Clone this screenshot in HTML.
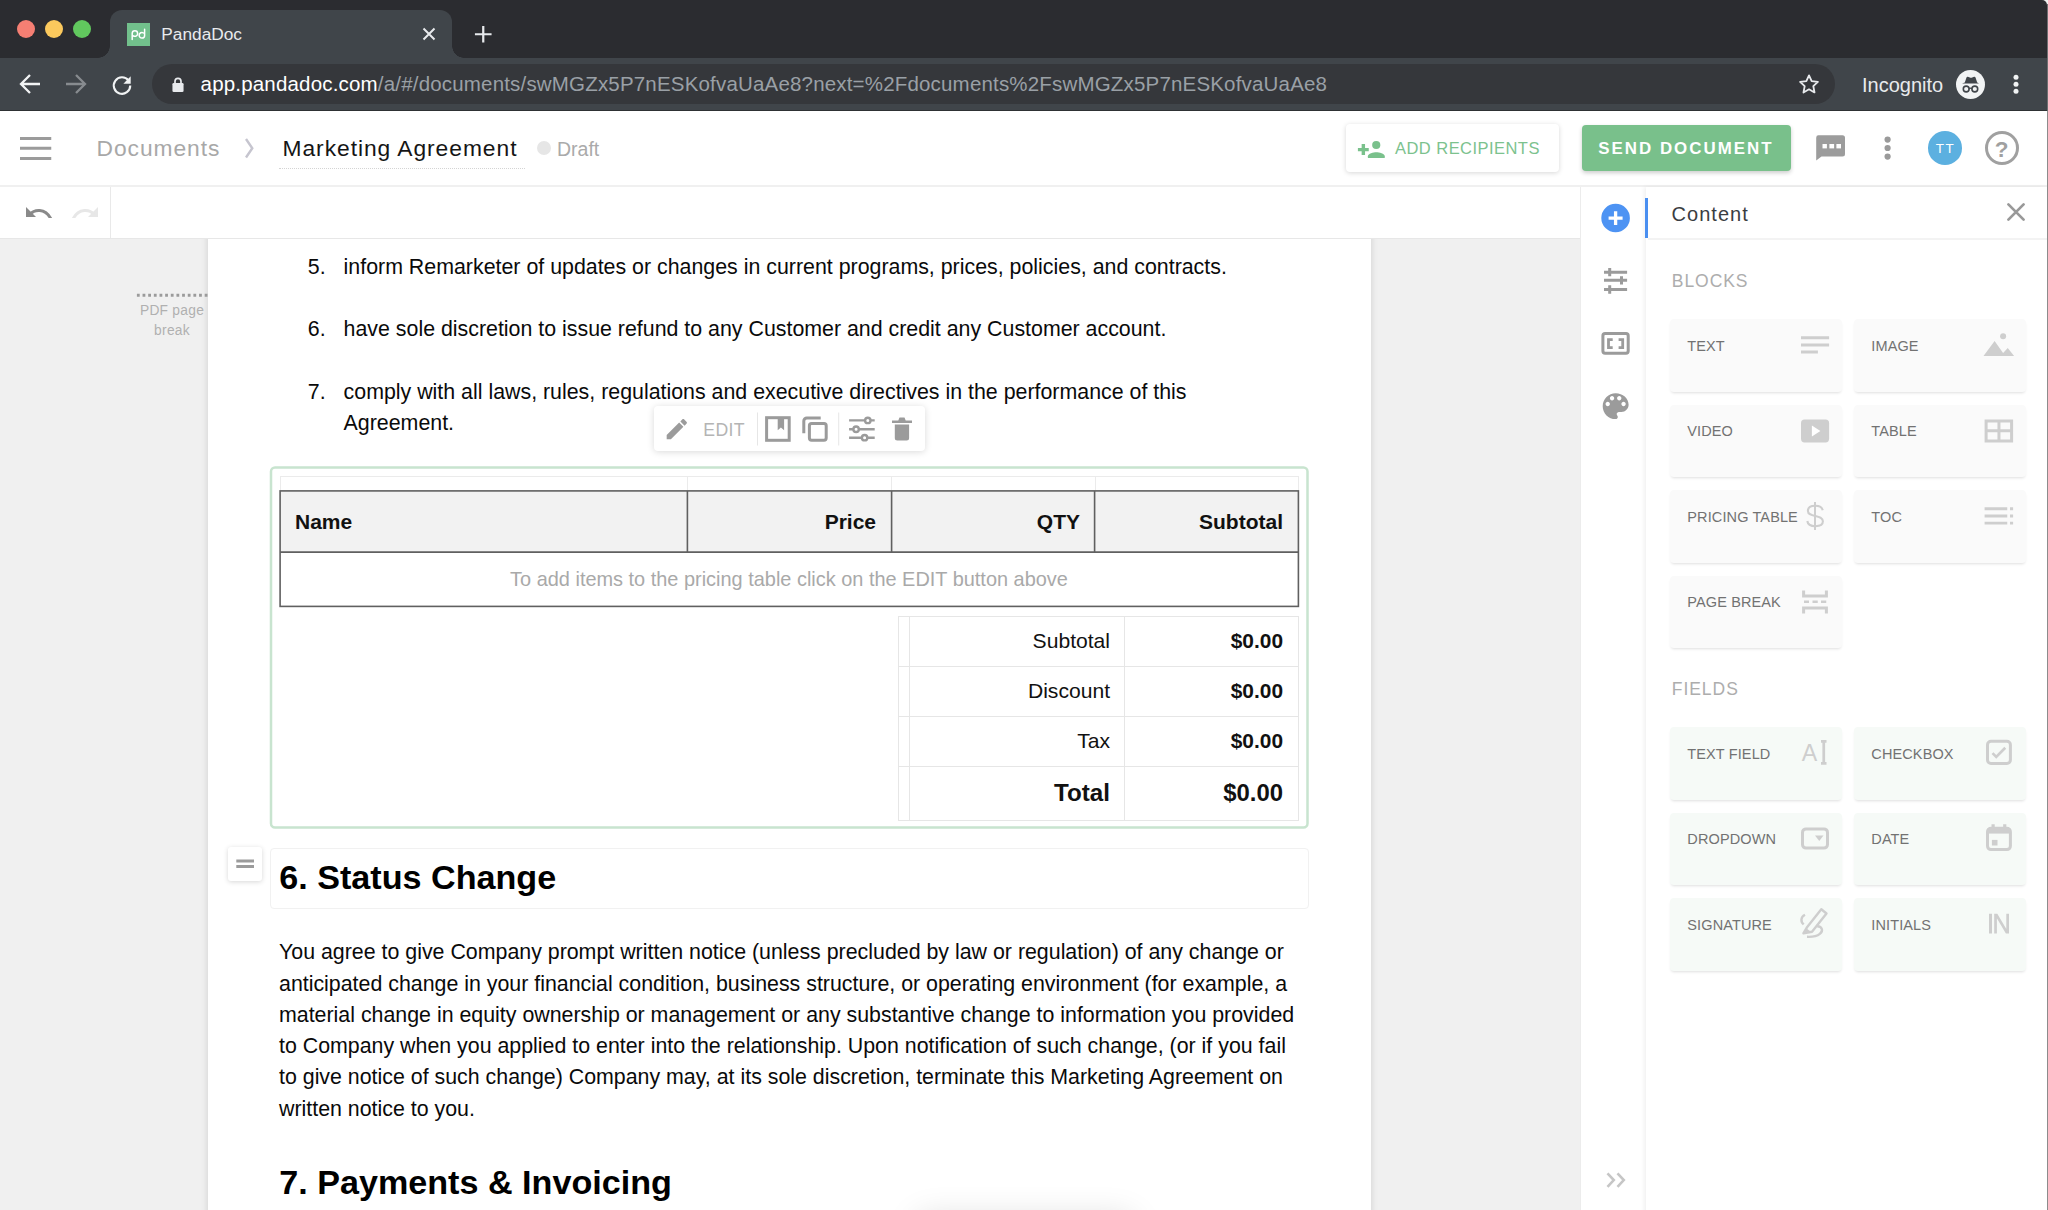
<!DOCTYPE html>
<html>
<head>
<meta charset="utf-8">
<title>PandaDoc</title>
<style>
*{box-sizing:border-box;margin:0;padding:0}
html,body{width:2048px;height:1210px;overflow:hidden;background:#fff;font-family:"Liberation Sans",sans-serif;}
.abs{position:absolute}
#root{position:relative;width:2048px;height:1210px;overflow:hidden;background:#f0f0f0}
/* ---------- browser chrome ---------- */
#tabstrip{left:0;top:0;width:2047px;height:58px;background:#2b2c30;border-top-right-radius:5px}
#tab{left:110px;top:10px;width:342px;height:48px;background:#40454a;border-radius:12px 12px 0 0}
#tab:before,#tab:after{content:"";position:absolute;bottom:0;width:12px;height:12px;background:radial-gradient(circle at 0 0,rgba(0,0,0,0) 11.5px,#40454a 12px)}
#tab:before{left:-12px}
#tab:after{right:-12px;background:radial-gradient(circle at 100% 0,rgba(0,0,0,0) 11.5px,#40454a 12px)}
.tl{width:18px;height:18px;border-radius:50%;top:20px}
#toolbar{left:0;top:58px;width:2047px;height:53px;background:#40454a;border-bottom:1px solid #2e3134}
#omni{left:152px;top:64px;width:1683px;height:40px;border-radius:20px;background:#35373b}
#url{left:200px;top:64px;height:40px;line-height:40px;font-size:20.5px;color:#9aa0a6;white-space:nowrap;letter-spacing:.18px}
#url b{font-weight:normal;color:#fff}
/* ---------- app header ---------- */
#apphead{left:0;top:111px;width:2047px;height:76px;background:#fff;border-bottom:2px solid #f0f0f0}
#bar2{left:0;top:187px;width:1580px;height:52px;background:#fff;border-bottom:1px solid #e7e7e7}
/* ---------- document ---------- */
#page{left:208px;top:225px;width:1163px;height:995px;background:#fff;box-shadow:0 0 7px rgba(0,0,0,.14)}
.doc{font-size:21.375px;color:#0a0a0a;white-space:nowrap;line-height:31.500px}
.th{font-size:21px;font-weight:700;line-height:30px;color:#111;white-space:nowrap}
.tl2{font-size:21.100px;line-height:30px;color:#111;white-space:nowrap}
.tl2.b{font-weight:700;font-size:20.900px}
.h{font-size:34.130px;font-weight:700;line-height:40px;color:#000;white-space:nowrap}
/* ---------- right panel ---------- */
#strip{left:1580px;top:187px;width:67px;height:1030px;background:#fff;border-left:1px solid #ececec}
#panel{left:1646px;top:187px;width:401px;height:1030px;background:#fff;box-shadow:-2px 0 4px rgba(0,0,0,.06)}
.card{width:171.700px;height:72.500px;background:#fafafa;border-radius:4px;box-shadow:0 2px 3px -1px rgba(0,0,0,.13)}
.card.f{background:#f6faf7}
.card span{position:absolute;left:17.300px;top:17.600px;font-size:14.5px;letter-spacing:.12px;color:#727272;line-height:18px;white-space:nowrap}
.card svg{position:absolute;left:0;top:0}
.sec{font-size:17.500px;letter-spacing:.950px;line-height:22px;color:#adadad;white-space:nowrap}
</style>
</head>
<body>
<div id="root">

<!-- browser chrome -->
<div id="tabstrip" class="abs"></div>
<div id="tab" class="abs"></div>
<div class="abs tl" style="left:17px;background:#f57f73"></div>
<div class="abs tl" style="left:45px;background:#fbc95d"></div>
<div class="abs tl" style="left:73px;background:#61c85e"></div>
<div id="toolbar" class="abs"></div>
<div id="omni" class="abs"></div>
<div id="url" class="abs" style="left:200.600px"><b>app.pandadoc.com</b>/a/#/documents/swMGZx5P7nESKofvaUaAe8?next=%2Fdocuments%2FswMGZx5P7nESKofvaUaAe8</div>


<!-- tab content -->
<div class="abs" style="left:127px;top:23px;width:23px;height:23px;background:#72c08c"></div>
<svg class="abs" style="left:127px;top:23px" width="23" height="23" viewBox="0 0 23 23"><path d="M5.2 16.6V10.4a2.7 2.7 0 0 1 5.4 0v.3a2.7 2.7 0 0 1-4.3 2.1M17.6 6.2v6.2a2.7 2.7 0 0 1-5.4 0v-.3a2.7 2.7 0 0 1 4.3-2.1" fill="none" stroke="#fff" stroke-width="1.5" stroke-linecap="round"/></svg>
<div class="abs" style="left:161.300px;top:22.300px;font-size:17.300px;line-height:24px;color:#e8eaed;white-space:nowrap">PandaDoc</div>
<svg class="abs" style="left:422px;top:27px" width="14" height="14" viewBox="0 0 14 14"><path d="M1.5 1.5l11 11M12.5 1.5l-11 11" stroke="#e8eaed" stroke-width="2" fill="none"/></svg>
<svg class="abs" style="left:474px;top:25px" width="18.500" height="18.500" viewBox="0 0 20 20"><path d="M10 1v18M1 10h18" stroke="#e8eaed" stroke-width="2.4" fill="none"/></svg>
<!-- nav icons -->
<svg class="abs" style="left:19px;top:73px" width="22" height="22" viewBox="0 0 22 22"><path d="M21 11H2.5M11 2l-9 9 9 9" stroke="#f1f3f4" stroke-width="2.3" fill="none"/></svg>
<svg class="abs" style="left:65px;top:73px" width="22" height="22" viewBox="0 0 22 22"><path d="M1 11h18.5M11 2l9 9-9 9" stroke="#878b8f" stroke-width="2.3" fill="none"/></svg>
<svg class="abs" style="left:110.500px;top:73.500px" width="22" height="22" viewBox="0 0 24 24"><path d="M19.2 7.2A9 9 0 1 0 21 12.6" stroke="#f1f3f4" stroke-width="2.3" fill="none"/><path d="M21.5 2.5v8h-8z" fill="#f1f3f4"/></svg>
<!-- lock -->
<svg class="abs" style="left:172px;top:77px" width="12" height="15.400" viewBox="0 0 14 18"><rect x="0.5" y="7" width="13" height="10.5" rx="1.5" fill="#e8eaed"/><path d="M3.5 7.5V5a3.5 3.5 0 0 1 7 0v2.5" stroke="#e8eaed" stroke-width="2" fill="none"/></svg>
<!-- star -->
<svg class="abs" style="left:1798px;top:73px" width="22" height="22" viewBox="0 0 24 24"><path d="M12 2.6l2.9 6.3 6.8.8-5 4.7 1.3 6.8-6-3.4-6 3.4 1.3-6.8-5-4.7 6.8-.8z" fill="none" stroke="#e8eaed" stroke-width="2" stroke-linejoin="round"/></svg>
<div class="abs" style="left:1862px;top:73px;font-size:20px;line-height:24px;color:#e8eaed;white-space:nowrap">Incognito</div>
<div class="abs" style="left:1956px;top:70px;width:29px;height:29px;border-radius:50%;background:#f1f3f4"></div>
<svg class="abs" style="left:1956px;top:70px" width="29" height="29" viewBox="0 0 29 29"><path d="M6 13.5h17l-1.8-.9-1.7-5.1c-.2-.6-.8-.9-1.4-.7l-1.9.7c-.8.3-1.6.3-2.4 0l-1.9-.7c-.6-.2-1.2.1-1.4.7l-1.7 5.1z" fill="#40454a"/><circle cx="10.2" cy="19" r="2.9" fill="none" stroke="#40454a" stroke-width="1.6"/><circle cx="18.8" cy="19" r="2.9" fill="none" stroke="#40454a" stroke-width="1.6"/><path d="M13 18.6q1.5-.9 3 0" fill="none" stroke="#40454a" stroke-width="1.4"/></svg>
<svg class="abs" style="left:2010px;top:70px" width="12" height="28" viewBox="0 0 12 28"><circle cx="6" cy="7.200" r="2.500" fill="#f1f3f4"/><circle cx="6" cy="14.200" r="2.500" fill="#f1f3f4"/><circle cx="6" cy="21.200" r="2.500" fill="#f1f3f4"/></svg>

<!-- app header -->
<div id="apphead" class="abs"></div>
<div id="page" class="abs"></div>
<div id="bar2" class="abs"></div>


<svg class="abs" style="left:20px;top:135px" width="32" height="27" viewBox="0 0 32 27"><path d="M0 3.450h31.250M0 13.200h31.250M0 23.450h31.250" stroke="#9b9b9b" stroke-width="3" fill="none"/></svg>
<div class="abs" style="left:96.500px;top:134.400px;font-size:22.800px;letter-spacing:.95px;line-height:28px;color:#a8a8a8;white-space:nowrap">Documents</div>
<svg class="abs" style="left:243px;top:136px" width="14" height="26" viewBox="0 0 14 26"><path d="M3 3l6.300 9.200L3 21.500" stroke="#c6c5cf" stroke-width="2.400" fill="none"/></svg>
<div class="abs" style="left:282.500px;top:134.400px;font-size:22.800px;letter-spacing:.96px;line-height:28px;color:#151515;white-space:nowrap">Marketing Agreement</div>
<div class="abs" style="left:279px;top:168px;width:246px;height:0;border-top:1.5px dotted #d4d4d4"></div>
<div class="abs" style="left:537px;top:141px;width:14px;height:14px;border-radius:50%;background:#e6e6e6"></div>
<div class="abs" style="left:557px;top:136px;font-size:19.5px;line-height:26px;color:#aaa;white-space:nowrap">Draft</div>
<!-- add recipients -->
<div class="abs" style="left:1346px;top:124px;width:213px;height:48px;background:#fff;border-radius:4px;box-shadow:0 1px 5px rgba(0,0,0,.16)"></div>
<svg class="abs" style="left:1357px;top:138px" width="28" height="22" viewBox="0 0 28 22"><circle cx="19.250" cy="7" r="4.100" fill="#7ac18c"/><path d="M10.900 19.900v-1.600c0-2.700 5.600-4.050 8.400-4.050s8.450 1.350 8.450 4.050v1.600z" fill="#7ac18c"/><path d="M6.350 6.100v10.900M.9 11.600h10.850" stroke="#7ac18c" stroke-width="3.400" fill="none"/></svg>
<div class="abs" style="left:1395px;top:137.200px;font-size:16.500px;letter-spacing:.46px;line-height:22px;color:#7cc28e;white-space:nowrap">ADD RECIPIENTS</div>
<!-- send -->
<div class="abs" style="left:1581.500px;top:125.400px;width:209.400px;height:45.200px;background:#79c08b;border-radius:4px;box-shadow:0 2px 4px rgba(0,0,0,.2)"></div>
<div class="abs" style="left:1598.300px;top:138.400px;font-size:16.900px;font-weight:700;letter-spacing:2px;line-height:22px;color:#fff;white-space:nowrap">SEND DOCUMENT</div>
<!-- chat -->
<svg class="abs" style="left:1815px;top:135px" width="31" height="26" viewBox="0 0 31 26"><path d="M4 .2h23.500a2.500 2.500 0 0 1 2.500 2.500v16.400a2.500 2.500 0 0 1-2.500 2.500H6.500L1.200 25.400V2.700A2.500 2.500 0 0 1 4 .2z" fill="#9c9c9c"/><rect x="7.500" y="9" width="4.400" height="4.400" fill="#fff"/><rect x="14.400" y="9" width="4.700" height="4.400" fill="#fff"/><rect x="21.400" y="9" width="4.600" height="4.400" fill="#fff"/></svg>
<svg class="abs" style="left:1881px;top:133px" width="14" height="30" viewBox="0 0 14 30"><circle cx="6.600" cy="6.600" r="3.100" fill="#9a9a9a"/><circle cx="6.600" cy="15" r="3.100" fill="#9a9a9a"/><circle cx="6.600" cy="23.600" r="3.100" fill="#9a9a9a"/></svg>
<div class="abs" style="left:1927.500px;top:131px;width:34.500px;height:34px;border-radius:50%;background:#5cb0e0;color:#fff;font-size:13.500px;letter-spacing:1.700px;line-height:36.500px;text-align:center;padding-left:1.700px">TT</div>
<div class="abs" style="left:1984.500px;top:131px;width:34px;height:34px;border-radius:50%;border:3px solid #a0a0a0;color:#a0a0a0;font-size:22.500px;font-weight:700;line-height:31px;text-align:center">?</div>
<!-- undo/redo -->
<svg class="abs" style="left:25px;top:206px" width="28" height="12.200" viewBox="0 0 28 12.200"><path d="M1 1v10h10z" fill="#8a8a8a"/><path d="M5 8.500C9 3.500 20 1.500 26 13" stroke="#8a8a8a" stroke-width="3" fill="none"/></svg>
<svg class="abs" style="left:71px;top:206px" width="28" height="12.200" viewBox="0 0 28 12.200"><path d="M27 1v10H17z" fill="#e7e7e7"/><path d="M23 8.500C19 3.500 8 1.500 2 13" stroke="#e7e7e7" stroke-width="3" fill="none"/></svg>
<div class="abs" style="left:110px;top:187px;width:1px;height:51px;background:#e9e9e9"></div>

<!-- document -->


<!-- pdf page break marker -->
<svg class="abs" style="left:130px;top:290px" width="78" height="10" viewBox="0 0 78 10"><path d="M6.900 5.300H78" stroke="#9b9b9b" stroke-width="3" stroke-dasharray="2.800 2.850" fill="none"/></svg>
<div class="abs" style="left:122px;top:301px;width:100px;text-align:center;font-size:13.800px;letter-spacing:.25px;line-height:19.800px;color:#b0b0b0">PDF page<br>break</div>

<!-- list -->
<div class="abs doc" style="left:307.800px;top:251.500px">5.</div>
<div class="abs doc" style="left:343.600px;top:251.500px">inform Remarketer of updates or changes in current programs, prices, policies, and contracts.</div>
<div class="abs doc" style="left:307.800px;top:314px">6.</div>
<div class="abs doc" style="left:343.600px;top:314px">have sole discretion to issue refund to any Customer and credit any Customer account.</div>
<div class="abs doc" style="left:307.800px;top:376.750px">7.</div>
<div class="abs doc" style="left:343.600px;top:376.750px">comply with all laws, rules, regulations and executive directives in the performance of this<br>Agreement.</div>

<!-- pricing block -->
<svg class="abs" style="left:265px;top:462px" width="1050" height="372" viewBox="0 0 1050 372"><rect x="6" y="5.500" width="1036.500" height="360" rx="4" fill="#fff" stroke="#c8e4cf" stroke-width="2.500"/></svg>
<div class="abs" style="left:280px;top:476px;width:1019px;height:14px;border:1px solid #ebebeb;border-bottom:0"></div>
<div class="abs" style="left:687px;top:476px;width:1px;height:14px;background:#ebebeb"></div>
<div class="abs" style="left:891px;top:476px;width:1px;height:14px;background:#ebebeb"></div>
<div class="abs" style="left:1095px;top:476px;width:1px;height:14px;background:#ebebeb"></div>
<svg class="abs" style="left:270px;top:480px" width="1040" height="136" viewBox="0 0 1040 136">
<rect x="10.100" y="10.900" width="1018.300" height="61.200" fill="#f2f2f2"/>
<g stroke="#606060" stroke-width="1.600" fill="none"><rect x="10.100" y="10.900" width="1018.300" height="115.500"/><path d="M10.100 72.100h1018.300M417.400 10.900v61.200M621.600 10.900v61.200M824.600 10.900v61.200"/></g>
</svg>
<div class="abs th" style="left:295px;top:506.750px">Name</div>
<div class="abs th" style="right:1172px;top:506.750px">Price</div>
<div class="abs th" style="right:968px;top:506.750px">QTY</div>
<div class="abs th" style="right:765px;top:506.750px">Subtotal</div>
<div class="abs" style="left:279.500px;top:564px;width:1019px;text-align:center;font-size:19.930px;line-height:30px;color:#a9a9a9;white-space:nowrap">To add items to the pricing table click on the EDIT button above</div>
<!-- totals -->
<div class="abs" style="left:898px;top:616px;width:401px;height:205px;border:1px solid #e6e6e6"></div>
<div class="abs" style="left:909px;top:616px;width:1px;height:205px;background:#e6e6e6"></div>
<div class="abs" style="left:1124px;top:616px;width:1px;height:205px;background:#e6e6e6"></div>
<div class="abs" style="left:898px;top:666px;width:401px;height:1px;background:#e6e6e6"></div>
<div class="abs" style="left:898px;top:716px;width:401px;height:1px;background:#e6e6e6"></div>
<div class="abs" style="left:898px;top:766px;width:401px;height:1px;background:#e6e6e6"></div>
<div class="abs tl2" style="right:938px;top:626px">Subtotal</div>
<div class="abs tl2" style="right:938px;top:676px">Discount</div>
<div class="abs tl2" style="right:938px;top:726px">Tax</div>
<div class="abs tl2" style="right:938px;top:777.700px;font-weight:700;font-size:24.200px">Total</div>
<div class="abs tl2 b" style="right:765px;top:626px">$0.00</div>
<div class="abs tl2 b" style="right:765px;top:676px">$0.00</div>
<div class="abs tl2 b" style="right:765px;top:726px">$0.00</div>
<div class="abs tl2 b" style="right:765px;top:777.700px;font-size:23.900px">$0.00</div>

<!-- floating block toolbar -->
<div class="abs" style="left:654px;top:406px;width:271px;height:45px;background:#fff;border-radius:4px;box-shadow:0 1px 7px rgba(0,0,0,.15)"></div>
<div class="abs" style="left:703.300px;top:418px;font-size:17.700px;letter-spacing:.35px;line-height:24px;color:#b4b4b4;white-space:nowrap">EDIT</div>
<svg class="abs" style="left:648px;top:400px" width="288" height="60" viewBox="0 0 288 60">
<g transform="translate(15.300,15.620) scale(1.128)" fill="#9b9b9b"><path d="M3 17.250V21h3.750L17.810 9.940l-3.750-3.750L3 17.250zM20.710 7.040c.390-.390.390-1.020 0-1.410l-2.340-2.340c-.390-.390-1.020-.390-1.410 0l-1.830 1.830 3.750 3.750 1.830-1.830z"/></g>
<rect x="109" y="12.500" width="1" height="33" fill="#e6e6e6"/>
<rect x="118.600" y="17.700" width="22.600" height="22.600" fill="none" stroke="#9b9b9b" stroke-width="3"/>
<path d="M129.700 17.700h6.400v12.500l-3.200-2.800-3.200 2.800z" fill="#9b9b9b"/>
<path d="M155.800 33.300V21a3 3 0 0 1 3-3H172.700" fill="none" stroke="#9b9b9b" stroke-width="3"/>
<rect x="161.400" y="23.600" width="16.800" height="16.700" rx="2.200" fill="none" stroke="#9b9b9b" stroke-width="3"/>
<rect x="190.200" y="12.500" width="1" height="33" fill="#e6e6e6"/>
<g stroke="#9b9b9b" stroke-width="2.400" fill="#fff"><path d="M201.100 20.400h25.600M201.100 29.250h25.600M201.100 37.700h25.600" fill="none"/><circle cx="219.800" cy="20.400" r="2.700"/><circle cx="208.100" cy="29.250" r="2.700"/><circle cx="216.600" cy="37.700" r="2.700"/></g>
<path d="M244 20.400h6.300l1.200-2.800h5l1.200 2.800H264v2.600H244zM246.800 24.600h14.300v13.300a2.500 2.500 0 0 1-2.500 2.500h-9.300a2.500 2.500 0 0 1-2.500-2.500z" fill="#9b9b9b"/>
</svg>

<!-- heading 6 -->
<div class="abs" style="left:270px;top:848px;width:1039px;height:61px;border:1.500px solid #f1f1f1;border-radius:4px"></div>
<div class="abs" style="left:228px;top:847px;width:34px;height:34px;background:#fff;border-radius:3px;box-shadow:0 1px 5px rgba(0,0,0,.16)"></div>
<svg class="abs" style="left:236px;top:858px" width="19" height="12" viewBox="0 0 19 12"><path d="M.3 3h17.700M.3 8.500h17.700" stroke="#9b9b9b" stroke-width="2.800" fill="none"/></svg>
<div class="abs h" style="left:279.300px;top:857px">6. Status Change</div>
<div class="abs doc" style="left:279px;top:937.300px;line-height:31.300px">You agree to give Company prompt written notice (unless precluded by law or regulation) of any change or<br>anticipated change in your financial condition, business structure, or operating environment (for example, a<br>material change in equity ownership or management or any substantive change to information you provided<br>to Company when you applied to enter into the relationship. Upon notification of such change, (or if you fail<br>to give notice of such change) Company may, at its sole discretion, terminate this Marketing Agreement on<br>written notice to you.</div>
<div class="abs h" style="left:279.300px;top:1162px">7. Payments &amp; Invoicing</div>
<!-- bottom toast shadow -->
<div class="abs" style="left:915px;top:1216px;width:220px;height:30px;border-radius:14px;background:#fff;box-shadow:0 0 32px rgba(0,0,0,.13)"></div>

<!-- right panel -->
<div id="strip" class="abs"></div>
<div id="panel" class="abs"></div>
<!-- strip icons -->
<svg class="abs" style="left:1590px;top:190px" width="56" height="240" viewBox="0 0 56 240">
<circle cx="25.600" cy="28" r="14.300" fill="#4d93f3"/>
<path d="M25.600 21.200v13.800M18.600 28.100h14" stroke="#fff" stroke-width="3.300" fill="none"/>
<g stroke="#9b9b9b" stroke-width="3" fill="none"><path d="M14 82.200h23.100M14 90.300h23.100M14 99.400h23.100M19.700 78.100v8.200M31.500 86.300v8.300M19.700 95.300v8.500"/></g>
<rect x="12.900" y="143.500" width="25.300" height="19.800" rx="2.200" fill="none" stroke="#9b9b9b" stroke-width="3"/>
<path d="M22.700 149.600h-4.200v8.100h4.200M28.600 149.600h4.100v8.100h-4.100" stroke="#9b9b9b" stroke-width="2.800" fill="none"/>
<g transform="translate(8.380,198.880) scale(1.439)"><path fill="#9b9b9b" fill-rule="evenodd" d="M12 3c-4.970 0-9 4.030-9 9s4.030 9 9 9c.830 0 1.500-.670 1.500-1.500 0-.390-.150-.740-.390-1.010-.230-.260-.380-.610-.380-.990 0-.830.670-1.500 1.500-1.500H16c2.760 0 5-2.240 5-5 0-4.420-4.030-8-9-8zm-5.500 9c-.830 0-1.500-.670-1.500-1.500S5.670 9 6.500 9 8 9.670 8 10.500 7.330 12 6.500 12zm3-4C8.670 8 8 7.330 8 6.500S8.670 5 9.500 5s1.500.670 1.500 1.500S10.330 8 9.500 8zm5 0c-.830 0-1.500-.670-1.500-1.500S13.670 5 14.500 5s1.500.670 1.500 1.500S15.330 8 14.500 8zm3 4c-.830 0-1.500-.670-1.500-1.500S16.670 9 17.500 9s1.500.670 1.500 1.500-.670 1.500-1.500 1.500z"/></g>
</svg>
<svg class="abs" style="left:1600px;top:1165px" width="32" height="30" viewBox="0 0 32 30"><path d="M7.500 8.300l6.300 6.800-6.300 6.800M17.500 8.300l6.300 6.800-6.300 6.800" stroke="#c6c6c6" stroke-width="2.600" fill="none"/></svg>
<!-- panel header -->
<div class="abs" style="left:1645px;top:198px;width:3.400px;height:40px;background:#4a8ff0"></div>
<div class="abs" style="left:1648px;top:238px;width:399px;height:2px;background:#f3f3f3"></div>
<div class="abs" style="left:1671.500px;top:201px;font-size:20px;letter-spacing:1.050px;line-height:26px;color:#3a3d42;white-space:nowrap">Content</div>
<svg class="abs" style="left:2006px;top:202.400px" width="20" height="20" viewBox="0 0 20 20"><path d="M2.400 2.400l15.200 15.200M17.600 2.400L2.400 17.600" stroke="#999" stroke-width="2.700" stroke-linecap="round" fill="none"/></svg>
<div class="abs sec" style="left:1671.800px;top:269.700px">BLOCKS</div>
<div class="abs sec" style="left:1671.800px;top:677.700px">FIELDS</div>
<div class="abs card" style="left:1670px;top:319px"><span>TEXT</span><svg width="172" height="72" viewBox="0 0 172 72"><path d="M131 18.700h28.100M131 26h28.100M131 33.050h16.900" stroke="#cecece" stroke-width="2.900" fill="none"/></svg></div>
<div class="abs card" style="left:1854px;top:319px"><span>IMAGE</span><svg width="172" height="72" viewBox="0 0 172 72"><circle cx="149.100" cy="17.250" r="3" fill="#cecece"/><path d="M129.500 37L140.600 22l8.500 12.100 4.650-5.200L160.100 37z" fill="#cecece"/></svg></div>
<div class="abs card" style="left:1670px;top:404.5px"><span>VIDEO</span><svg width="172" height="72" viewBox="0 0 172 72"><rect x="131" y="14.600" width="28.100" height="22.800" rx="3.600" fill="#cecece"/><path d="M141.900 20.500v11l8.500-5.500z" fill="#fff"/></svg></div>
<div class="abs card" style="left:1854px;top:404.5px"><span>TABLE</span><svg width="172" height="72" viewBox="0 0 172 72"><path d="M132.100 16.100h25.500v19.800h-25.500zM144.950 16.100v19.800M132.100 25.700h25.500" stroke="#cecece" stroke-width="3" fill="none"/></svg></div>
<div class="abs card" style="left:1670px;top:490px"><span>PRICING TABLE</span><svg width="172" height="72" viewBox="0 0 172 72"><path d="M145 11.900v28.100" stroke="#cecece" stroke-width="2" fill="none"/><path d="M152.700 20.300c-.6-3-3.300-4.500-7.500-4.500-4 0-7.300 1.700-7.300 5.100 0 6.800 15 3.400 15 10.400 0 3.200-3.200 4.900-7.500 4.900-4.400 0-7.600-1.800-8.100-5.200" stroke="#cecece" stroke-width="2.100" fill="none"/></svg></div>
<div class="abs card" style="left:1854px;top:490px"><span>TOC</span><svg width="172" height="72" viewBox="0 0 172 72"><path d="M130.600 18.750h22.650M130.600 26h22.650M130.600 33.100h22.650M156 18.750h3.100M156 26h3.100M156 33.100h3.100" stroke="#cecece" stroke-width="2.900" fill="none"/></svg></div>
<div class="abs card" style="left:1670px;top:575.5px"><span>PAGE BREAK</span><svg width="172" height="72" viewBox="0 0 172 72"><path d="M133.600 14.500v5.500h22.800v-5.500M133.600 37.400v-5.400h22.800v5.400" stroke="#cecece" stroke-width="3" fill="none"/><path d="M134 25.750h5M142.500 25.750h5.250M151 25.750h5.250" stroke="#cecece" stroke-width="2.500" fill="none"/></svg></div>
<div class="abs card f" style="left:1670px;top:727px"><span>TEXT FIELD</span><svg width="172" height="72" viewBox="0 0 172 72"><text x="131.800" y="34" font-family="Liberation Sans, sans-serif" font-size="23.200" fill="#cecece">A</text><path d="M153.750 13v24.750M151 14.300h5.500M151 36.450h5.500" stroke="#cecece" stroke-width="2.700" fill="none"/></svg></div>
<div class="abs card f" style="left:1854px;top:727px"><span>CHECKBOX</span><svg width="172" height="72" viewBox="0 0 172 72"><rect x="133.500" y="14.250" width="22.900" height="22.250" rx="3.500" fill="none" stroke="#cecece" stroke-width="3"/><path d="M138.500 26.100l3.750 3.800 9-9.150" stroke="#cecece" stroke-width="2.700" fill="none"/></svg></div>
<div class="abs card f" style="left:1670px;top:812.5px"><span>DROPDOWN</span><svg width="172" height="72" viewBox="0 0 172 72"><rect x="132.500" y="15.900" width="25" height="19.200" rx="3.500" fill="none" stroke="#cecece" stroke-width="3"/><path d="M145 22.500h8.500l-4.250 5.600z" fill="#cecece"/></svg></div>
<div class="abs card f" style="left:1854px;top:812.5px"><span>DATE</span><svg width="172" height="72" viewBox="0 0 172 72"><path d="M139.100 11.250v4M150.750 11.250v4" stroke="#cecece" stroke-width="3.200" fill="none"/><rect x="133.500" y="15.250" width="22.900" height="21.350" rx="3.500" fill="none" stroke="#cecece" stroke-width="3"/><path d="M133.500 15.250h22.900v5.350h-22.900z" fill="#cecece"/><rect x="137.900" y="26.900" width="5.600" height="5.600" fill="#cecece"/></svg></div>
<div class="abs card f" style="left:1670px;top:898px"><span>SIGNATURE</span><svg width="172" height="72" viewBox="0 0 172 72"><path d="M136.800 29.600L151.300 11.300l5.200 4.200L142 33.700l-8.600 1.600z" stroke="#cecece" stroke-width="2.400" fill="none" stroke-linejoin="round"/><path d="M136.300 30.200l4.800 3.900-7.700 1.200z" fill="#cecece"/><path d="M135 16.800c-4.200 2.300-4.800 6.500-1.300 9.600M147.200 28.200c5.200.3 6.300 4.600 2.600 7.700-3 2.500-8 3.100-12.800 2.900" stroke="#cecece" stroke-width="2.400" fill="none"/></svg></div>
<div class="abs card f" style="left:1854px;top:898px"><span>INITIALS</span><svg width="172" height="72" viewBox="0 0 172 72"><path d="M135 15.750h3v19.750h-3zM140.200 15.750h2.700v19.750h-2.700zM152.300 15.750h2.700v19.750h-2.700zM140.200 15.750h3.100l11.700 19.750h-3.100z" fill="#cecece"/></svg></div>
<div class="abs" style="left:2047px;top:4px;width:1px;height:107px;background:#6e6f71"></div><div class="abs" style="left:2047px;top:111px;width:1px;height:1099px;background:#8c8c8c"></div>


</div>
</body>
</html>
